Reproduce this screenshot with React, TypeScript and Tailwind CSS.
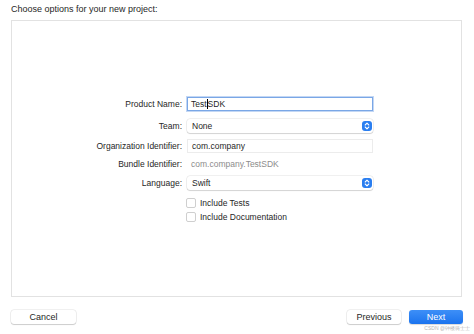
const font = 'font-["Liberation_Sans",Arial,sans-serif]'

function Stepper() {
  return (
    <span className="flex h-[10px] w-[10px] items-center justify-center rounded-[3px] bg-[#2a7ef0]">
      <svg width="6" height="8" viewBox="0 0 6 8" fill="none" stroke="white" strokeWidth="1.1" strokeLinecap="round" strokeLinejoin="round">
        <path d="M1.2 3 L3 1.2 L4.8 3" />
        <path d="M1.2 5 L3 6.8 L4.8 5" />
      </svg>
    </span>
  )
}

function Label({ children }: { children: string }) {
  return <div className="pr-[5px] text-right text-[8.5px] leading-[14px] text-[#262626]">{children}</div>
}

function Popup({ value }: { value: string }) {
  return (
    <div className="flex h-[14px] w-[186px] items-center justify-between rounded-[3px] bg-white pl-[5px] pr-[1px] text-[8.5px] text-[#1f1f1f] shadow-[0_0_0_0.5px_rgba(0,0,0,0.12),0_1px_1px_rgba(0,0,0,0.12)]">
      <span>{value}</span>
      <Stepper />
    </div>
  )
}

function Check({ label }: { label: string }) {
  return (
    <div className="flex items-center gap-[4px] pl-[174px]">
      <span className="h-[10px] w-[10px] rounded-[2px] border border-[#cfcfcf] bg-white" />
      <span className="text-[8.5px] leading-[10px] text-[#262626]">{label}</span>
    </div>
  )
}

export default function App() {
  return (
    <div className={`${font} h-[334px] w-[474px] overflow-hidden bg-white`}>
      <p className="pl-[11px] pt-[3px] text-[9px] leading-[12px] text-[#262626]">Choose options for your new project:</p>

      <section className="ml-[11px] mt-[5px] h-[277px] w-[451px] border border-[#e2e2e2] bg-white pt-[76px]">
        <div className="flex items-center">
          <div className="w-[175px]"><Label>Product Name:</Label></div>
          <div className="flex h-[14px] w-[186px] items-center border border-[#7aa7e6] bg-white pl-[3px] text-[8.5px] text-[#1f1f1f] shadow-[0_0_0_1px_rgba(122,167,230,0.45)]">
            <span>Test</span>
            <span className="h-[10px] w-px bg-black" />
            <span>SDK</span>
          </div>
        </div>

        <div className="mt-[8px] flex items-center">
          <div className="w-[175px]"><Label>Team:</Label></div>
          <Popup value="None" />
        </div>

        <div className="mt-[6px] flex items-center">
          <div className="w-[175px]"><Label>Organization Identifier:</Label></div>
          <div className="flex h-[14px] w-[186px] items-center border border-[#ececec] bg-white pl-[4px] text-[8.5px] text-[#1f1f1f]">
            com.company
          </div>
        </div>

        <div className="mt-[4px] flex items-center">
          <div className="w-[175px]"><Label>Bundle Identifier:</Label></div>
          <div className="pl-[4px] text-[8.5px] leading-[14px] text-[#8c8c8c]">com.company.TestSDK</div>
        </div>

        <div className="mt-[5px] flex items-center">
          <div className="w-[175px]"><Label>Language:</Label></div>
          <Popup value="Swift" />
        </div>

        <div className="mt-[8px]"><Check label="Include Tests" /></div>
        <div className="mt-[4px]"><Check label="Include Documentation" /></div>
      </section>

      <div className="relative mt-[13px] flex items-center px-[11px] text-[9px] text-[#262626]">
        <button className="h-[14px] w-[65px] rounded-[3px] bg-white leading-[14px] shadow-[0_0_0_0.5px_rgba(0,0,0,0.12),0_1px_1px_rgba(0,0,0,0.15)]">Cancel</button>
        <div className="flex-1" />
        <button className="h-[14px] w-[54px] rounded-[3px] bg-white leading-[14px] shadow-[0_0_0_0.5px_rgba(0,0,0,0.12),0_1px_1px_rgba(0,0,0,0.15)]">Previous</button>
        <button className="ml-[8px] h-[14px] w-[54px] rounded-[3px] bg-gradient-to-b from-[#3d8ff7] to-[#1a73ee] leading-[14px] text-white shadow-[0_1px_1px_rgba(0,0,0,0.15)]">Next</button>
        <span className="absolute right-[4px] top-[15px] text-[5px] leading-[6px] text-[#b5b5b5]">CSDN @钟楼骑士士</span>
      </div>
    </div>
  )
}
